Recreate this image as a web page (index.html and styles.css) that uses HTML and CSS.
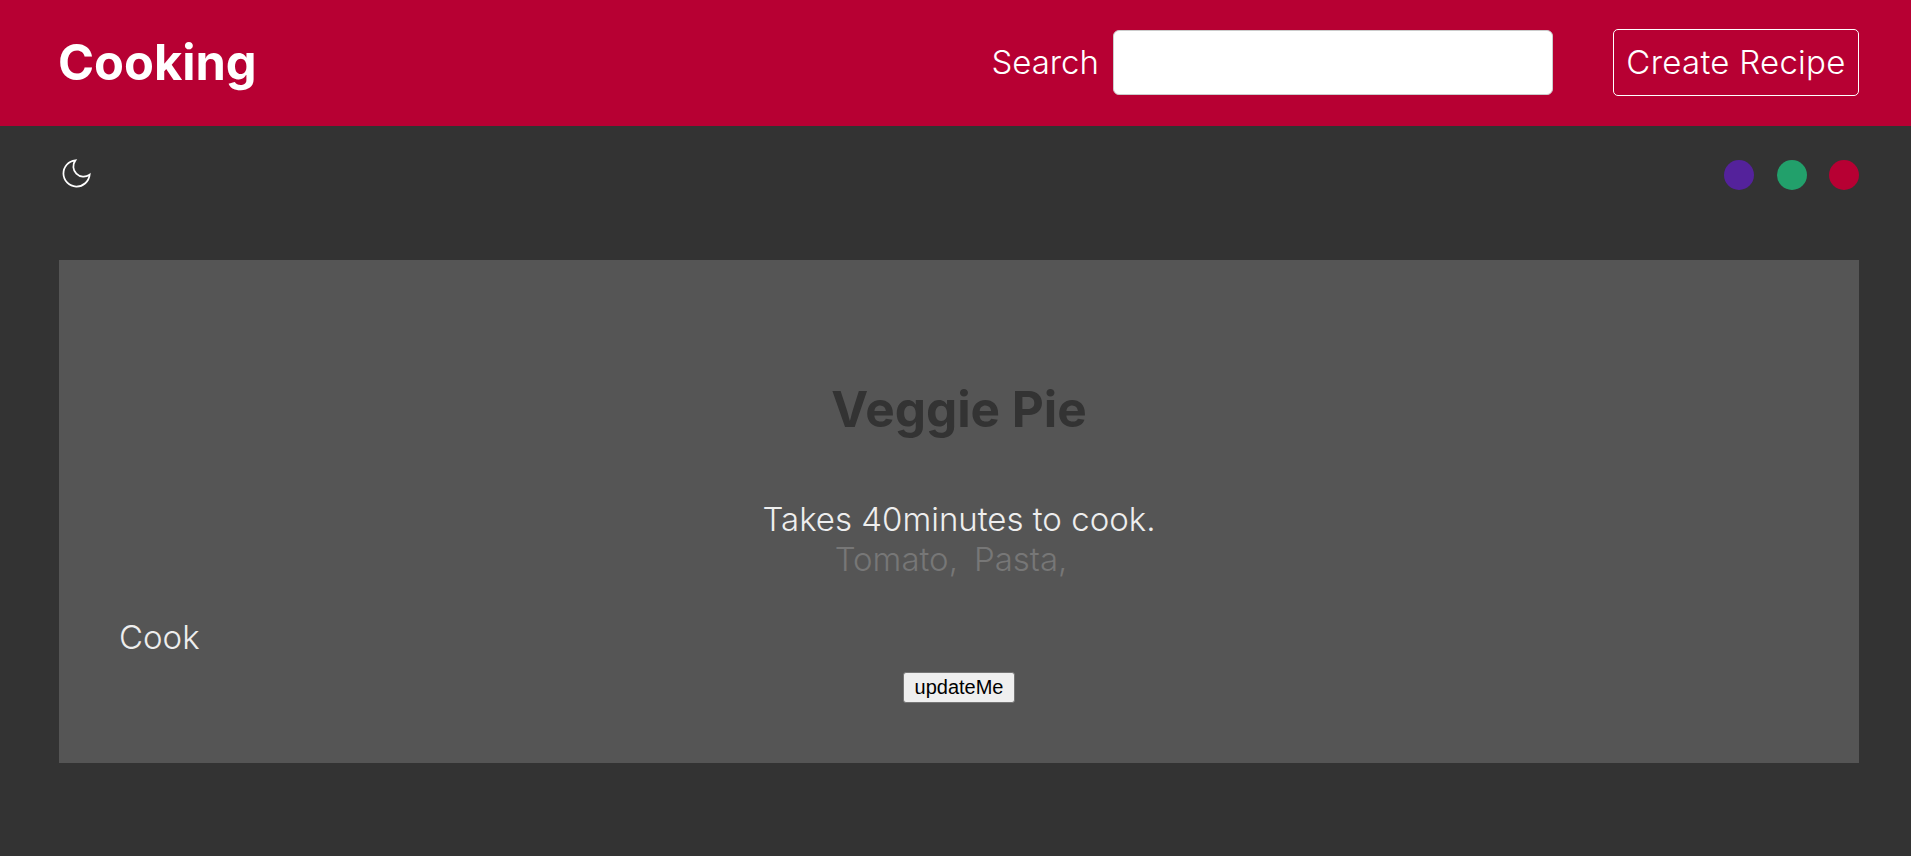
FILE: index.html
```html
<!DOCTYPE html>
<html lang="en">
<head>
<meta charset="utf-8">
<title>Cooking</title>
<link rel="stylesheet" href="styles.css">
</head>
<body>
<header class="navbar">
  <a class="brand" href="#">Cooking</a>
  <div class="nav-actions">
    <form class="searchbar">
      <label for="search">Search</label>
      <input id="search" type="text">
    </form>
    <a class="create" href="#">Create Recipe</a>
  </div>
</header>
<main class="content">
  <div class="toolbar">
    <svg class="moon" viewBox="0 0 24 24" aria-hidden="true"><path d="M21 12.79A9 9 0 1 1 11.21 3 7 7 0 0 0 21 12.79z"/></svg>
    <div class="themes">
      <span class="dot dot-purple"></span>
      <span class="dot dot-green"></span>
      <span class="dot dot-red"></span>
    </div>
  </div>
  <article class="recipe">
    <h2 class="title">Veggie Pie</h2>
    <p class="takes">Takes 40minutes to cook.</p>
    <ul class="ingredients"><li>Tomato,</li><li>Pasta,</li></ul>
    <p class="method">Cook</p>
    <button class="update" type="button">updateMe</button>
  </article>
</main>
</body>
</html>
```
FILE: styles.css
```css
* { box-sizing: border-box; }
html, body { margin: 0; height: 100%; }
body {
  background: #333;
  color: #eee;
  font-family: "Inter", "Open Sans", sans-serif;
  font-weight: 300;
}
.navbar {
  display: flex;
  align-items: center;
  justify-content: space-between;
  height: 126px;
  padding: 0 52px 2px 58px;
  background: #b70033;
  color: #fff;
}
.brand { color: #fff; font-size: 48.8px; font-weight: 700; text-decoration: none; }
.nav-actions { display: flex; align-items: center; gap: 60px; }
.searchbar { display: flex; align-items: center; gap: 14px; font-size: 33px; }
.searchbar input {
  width: 440px;
  height: 65px;
  border: 1px solid #ccc;
  border-radius: 6px;
  background: #fff;
}
.create {
  display: flex;
  align-items: center;
  width: 246px;
  height: 67px;
  justify-content: center;
  border: 1px solid #fff;
  border-radius: 5px;
  color: #fff;
  font-size: 33px;
  letter-spacing: 0.28px;
  text-decoration: none;
}
.content { padding: 34px 52px 0 59px; }
.toolbar { display: flex; justify-content: space-between; align-items: flex-start; height: 30px; margin-bottom: 70px; }
.moon { width: 35px; height: 35px; margin-top: -4px; fill: none; stroke: #fff; stroke-width: 1.2; }
.themes { display: flex; gap: 22.5px; }
.dot { width: 30px; height: 30px; border-radius: 50%; }
.dot-purple { background: #54229b; }
.dot-green { background: #22a06b; }
.dot-red { background: #b70033; }
.recipe {
  display: flex;
  flex-direction: column;
  align-items: center;
  height: 503px;
  padding: 120px 60px 0;
  background: #555;
  text-align: center;
}
.title { margin: 0 0 62px; color: #333; font-size: 49.5px; line-height: 58px; font-weight: 700; }
.takes { margin: 0 0 1px; font-size: 33px; line-height: 38px; }
.ingredients { display: flex; margin: 0; padding: 0; list-style: none; color: #777; font-size: 33px; line-height: 40px; }
.ingredients li { margin-right: 16px; }
.method { align-self: flex-start; margin: 38px 0 0; font-size: 33px; line-height: 40px; }
.update {
  margin-top: 15px;
  width: 112px;
  height: 31px;
  padding: 0;
  border: 1px solid #767676;
  border-radius: 3px;
  background: #efefef;
  color: #000;
  font: 400 20px "Liberation Sans", Arial, sans-serif;
}
```
